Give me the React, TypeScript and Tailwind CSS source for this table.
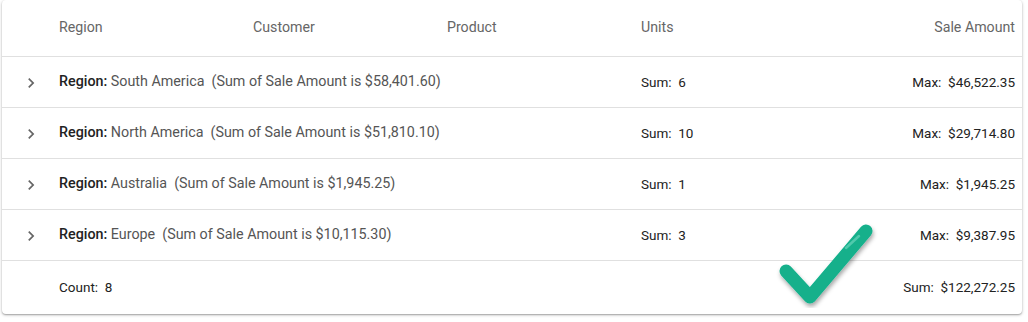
import React from 'react';

const groups = [
  { region: 'South America', total: '$58,401.60', units: '6', max: '$46,522.35' },
  { region: 'North America', total: '$51,810.10', units: '10', max: '$29,714.80' },
  { region: 'Australia', total: '$1,945.25', units: '1', max: '$1,945.25' },
  { region: 'Europe', total: '$10,115.30', units: '3', max: '$9,387.95' },
];

const Chevron = () => (
  <svg width="20" height="20" viewBox="0 0 24 24" className="fill-[#666]">
    <path d="M10 6L8.59 7.41 13.17 12l-4.58 4.59L10 18l6-6z" />
  </svg>
);

const CheckMark = () => (
  <svg width="110" height="90" viewBox="0 0 110 90" className="absolute left-[770px] top-[218px] pointer-events-none">
    <defs>
      <filter id="sh" x="-20%" y="-20%" width="150%" height="150%">
        <feDropShadow dx="1" dy="3" stdDeviation="2" floodColor="#000" floodOpacity="0.35" />
      </filter>
    </defs>
    <path
      d="M16 53 L40 79 L96 13"
      fill="none"
      stroke="#12b08b"
      strokeWidth="13"
      strokeLinecap="round"
      strokeLinejoin="round"
      filter="url(#sh)"
    />
    <path d="M76 30 L89 18" fill="none" stroke="#5fd0b4" strokeWidth="2.5" strokeLinecap="round" opacity="0.8" />
  </svg>
);

export default function App() {
  return (
    <div className="relative w-[1028px] h-[322px] bg-white font-['Roboto',sans-serif] text-[14px]">
      <div className="ml-[2px] w-[1020px] bg-white rounded-[4px] shadow-[0_1px_3px_rgba(0,0,0,0.3),0_1px_1px_rgba(0,0,0,0.14)]">
        {/* header */}
        <div className="h-[57px] pl-[57px] pr-[7px] grid grid-cols-[194px_194px_194px_1fr] items-center text-[14.2px] text-[#666] border-b border-[#e0e0e0]">
          <div>Region</div>
          <div>Customer</div>
          <div>Product</div>
          <div className="flex justify-between">
            <span>Units</span>
            <span>Sale Amount</span>
          </div>
        </div>

        {/* group rows */}
        {groups.map((g) => (
          <div key={g.region} className="h-[51px] flex items-center border-b border-[#e0e0e0] pr-[7px]">
            <div className="w-[57px] flex items-center pl-[19px] pt-[2px]">
              <Chevron />
            </div>
            <div className="w-[582px] text-[14.3px] text-[#555]">
              <span className="font-medium text-[#222]">Region:</span> {g.region}&nbsp;&nbsp;(Sum of Sale Amount is {g.total})
            </div>
            <div className="flex-1 flex justify-between text-[13.5px] text-[#222]">
              <span>Sum:&nbsp;&nbsp;{g.units}</span>
              <span>Max:&nbsp;&nbsp;{g.max}</span>
            </div>
          </div>
        ))}

        {/* footer */}
        <div className="h-[53px] pl-[57px] pr-[7px] flex items-center justify-between text-[13.5px] text-[#222]">
          <span>Count:&nbsp;&nbsp;8</span>
          <span>Sum:&nbsp;&nbsp;$122,272.25</span>
        </div>
      </div>
      <CheckMark />
    </div>
  );
}
